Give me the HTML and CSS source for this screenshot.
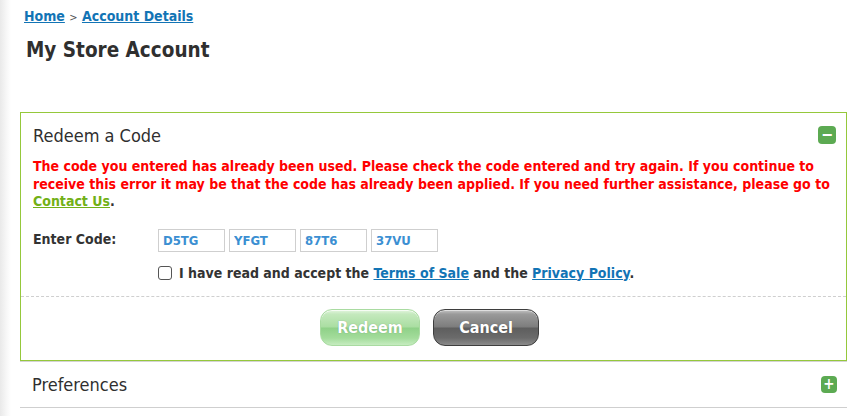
FILE: index.html
```html
<!DOCTYPE html>
<html>
<head>
<meta charset="utf-8">
<link rel="stylesheet" href="styles.css">
</head>
<body>
<div class="page">
  <div class="crumbs"><a href="#">Home</a> <span class="sep">&gt;</span> <a href="#">Account Details</a></div>
  <h1 class="title">My Store Account</h1>

  <section class="panel">
    <div class="panel-head">
      <h2>Redeem a Code</h2>
      <span class="toggle">&minus;</span>
    </div>
    <p class="error">The code you entered has already been used. Please check the code entered and try again. If you continue to receive this error it may be that the code has already been applied. If you need further assistance, please go to <a href="#" class="contact">Contact Us</a><span class="dot">.</span></p>
    <div class="code-row">
      <label class="code-label">Enter Code:</label>
      <div class="codes">
        <input class="code" value="D5TG">
        <input class="code" value="YFGT">
        <input class="code" value="87T6">
        <input class="code" value="37VU">
      </div>
    </div>
    <div class="accept">
      <span class="check"></span>
      <span>I have read and accept the <a href="#">Terms of Sale</a> and the <a href="#">Privacy Policy</a>.</span>
    </div>
    <div class="actions">
      <button class="btn redeem">Redeem</button>
      <button class="btn cancel">Cancel</button>
    </div>
  </section>

  <div class="section-row">
    <h2>Preferences</h2>
    <span class="toggle plus">+</span>
  </div>
</div>
</body>
</html>
```

FILE: styles.css
```css
html, body {
  margin: 0;
  padding: 0;
}
body {
  background: linear-gradient(to right, #e9e9e9 0, #f6f6f6 6px, #fff 11px);
  font-family: "DejaVu Sans Condensed", "DejaVu Sans", sans-serif;
  font-stretch: condensed;
  color: #333;
  height: 416px;
  overflow: hidden;
}
.page {
  margin-left: 20px;
  width: 827px;
}
.crumbs {
  padding: 7px 0 0 4px;
  height: 18px;
  font-size: 14px;
  font-weight: bold;
  line-height: 18px;
}
.crumbs a {
  color: #1274b5;
  text-decoration: underline;
}
.crumbs .sep {
  color: #555;
  font-weight: normal;
  font-size: 11px;
}
.title {
  margin: 12px 0 0 6px;
  font-size: 20.5px;
  font-weight: bold;
  line-height: 26px;
  color: #2f2f2f;
  height: 75px;
}
.panel {
  border: 1px solid #95c83b;
  box-shadow: 0 1px 0 #d4d4d4;
  padding: 0 0 14px 0;
}
.panel-head, .section-row {
  display: flex;
  align-items: center;
  justify-content: space-between;
  padding: 0 10px 0 12px;
}
.panel-head {
  height: 42px;
  margin-top: 1px;
}
.panel-head h2, .section-row h2 {
  margin: 0;
  font-size: 18px;
  font-weight: normal;
  color: #2f2f2f;
}
.toggle {
  width: 18px;
  height: 18px;
  border-radius: 4px;
  background: #5caa52;
  color: #fff;
  font-weight: bold;
  font-size: 16px;
  line-height: 17px;
  text-align: center;
  font-family: "DejaVu Sans", sans-serif;
}
.toggle.plus {
  width: 16px;
  height: 17px;
  font-size: 15px;
}
.error {
  margin: 2px 0 0 0;
  padding: 0 12px;
  color: #ff0000;
  font-weight: bold;
  font-size: 14px;
  line-height: 17.5px;
}
.error .contact {
  color: #72b016;
  text-decoration: underline;
}
.error .dot {
  color: #333;
}
.code-row {
  display: flex;
  align-items: flex-start;
  padding: 18px 0 0 12px;
}
.code-label {
  width: 125px;
  font-weight: bold;
  font-size: 14px;
  line-height: 20px;
  color: #333;
}
.codes {
  display: flex;
  gap: 4px;
}
.code {
  box-sizing: border-box;
  width: 67px;
  height: 23px;
  border: 1px solid #cfcfcf;
  padding: 0 4px;
  font-family: "DejaVu Sans Condensed", "DejaVu Sans", sans-serif;
  font-stretch: condensed;
  font-weight: bold;
  font-size: 13px;
  color: #3b8fd2;
  background: #fff;
  outline: none;
}
.accept {
  display: flex;
  align-items: center;
  gap: 7px;
  padding: 11px 0 0 137px;
  font-weight: bold;
  font-size: 14px;
  color: #333;
  height: 20px;
}
.accept a {
  color: #1274b5;
  text-decoration: underline;
}
.check {
  width: 12px;
  height: 12px;
  border: 1px solid #555;
  border-radius: 3px;
  background: #fff;
}
.actions {
  margin-top: 13px;
  border-top: 1px dashed #cfcfcf;
  display: flex;
  justify-content: center;
  gap: 13px;
  padding: 12px 8px 0 0;
}
.btn {
  height: 37px;
  border-radius: 12px;
  font-family: "DejaVu Sans Condensed", "DejaVu Sans", sans-serif;
  font-stretch: condensed;
  font-weight: bold;
  font-size: 16px;
  color: #fff;
  padding: 0;
  text-shadow: 0 0 1px rgba(0,0,0,0.3);
}
.redeem {
  width: 100px;
  border: 1px solid #a9dba1;
  background: linear-gradient(to bottom, #e3f5df 0%, #c4e9bd 12%, #aadea2 48%, #8fd188 52%, #a3dc9b 80%, #c6ecc0 100%);
  box-shadow: inset 0 1px 0 rgba(255,255,255,0.7);
}
.cancel {
  width: 106px;
  border: 1px solid #3e3e3e;
  background: linear-gradient(to bottom, #c4c4c4 0%, #9a9a9a 12%, #7d7d7d 48%, #5e5e5e 52%, #6b6b6b 80%, #8b8b8b 100%);
  box-shadow: inset 0 1px 0 rgba(255,255,255,0.5);
}
.section-row {
  height: 44px;
  padding-top: 2px;
  border-bottom: 1px solid #cfcfcf;
}
```
